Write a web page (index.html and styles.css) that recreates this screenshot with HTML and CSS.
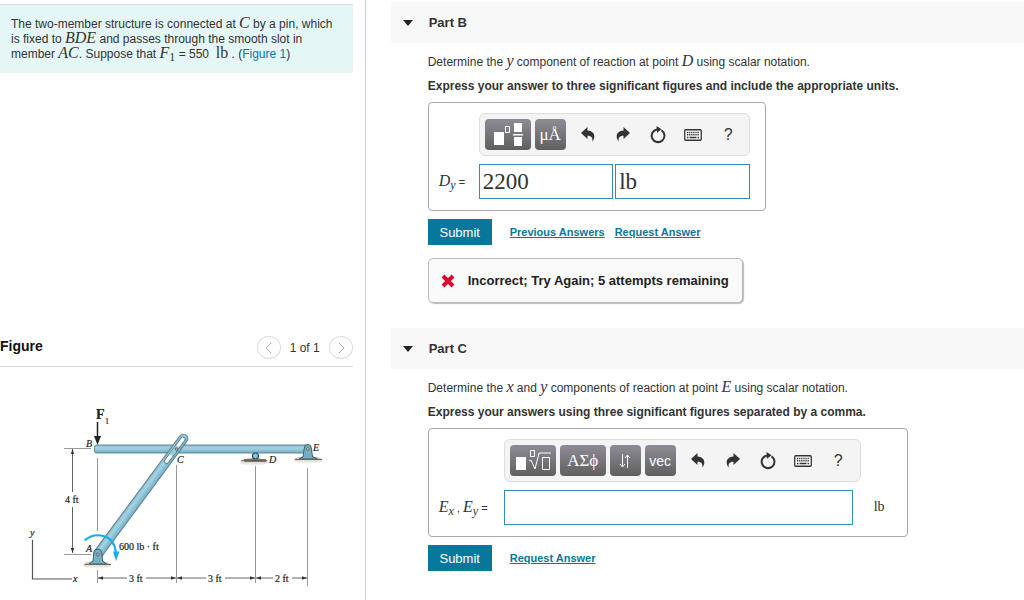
FILE: index.html
```html
<!DOCTYPE html>
<html lang="en">
<head>
    <meta charset="UTF-8">
    <meta name="viewport" content="width=device-width, initial-scale=1.0">
    <title>Two-member structure</title>
    <link rel="stylesheet" href="styles.css">
</head>
<body>
    <!-- shared toolbar icons -->
    <svg class="sprite" aria-hidden="true">
        <symbol id="undo" viewBox="0 0 14 15">
            <path d="M0 6 6.500 0v3.500c4.500.2 7 2.800 6.800 6.200-.1 2-.8 3.300-2.100 4.800.8-3.600-.5-5.800-4.700-5.800V12z"/>
        </symbol>
        <symbol id="redo" viewBox="0 0 14 15">
            <path d="M14 6 7.500 0v3.500C3 3.700.5 6.300.7 9.700c.1 2 .8 3.300 2.100 4.800-.8-3.600.5-5.800 4.700-5.800V12z"/>
        </symbol>
        <symbol id="reset" viewBox="0 0 18 18">
            <path d="M12.500 4.300A6.400 6.400 0 1 1 8 3.400" fill="none" stroke="currentColor" stroke-width="2"/>
            <path d="M7.500 0 12.600 3.200 8 6.800z"/>
        </symbol>
        <symbol id="keyboard" viewBox="0 0 18 12">
            <rect x=".75" y=".75" width="16.500" height="10.500" rx="1" fill="#fff" stroke="currentColor" stroke-width="1.300"/>
            <path d="M3 3.500h12M3 5.700h12" stroke="currentColor" stroke-width="1.400" stroke-dasharray="1.300 .8"/>
            <path d="M3 8.500h1.500M5.500 8.500h7M13.500 8.500H15" stroke="currentColor" stroke-width="1.400"/>
        </symbol>
    </svg>

    <div class="page">
        <aside class="left">
            <div class="problem">
                The two-member structure is connected at <i>C</i> by a pin, which is fixed to <i>BDE</i> and passes through the smooth slot in member <i>AC</i>. Suppose that <i>F</i><sub>1</sub> = 550 &nbsp;<span class="unit">lb</span> . (<a href="#figure">Figure 1</a>)
            </div>

            <section class="figure" id="figure">
                <div class="figure-head">
                    <h2>Figure</h2>
                    <div class="pager">
                        <button aria-label="Previous figure"><svg viewBox="0 0 10 12"><path d="M7 1 2 6l5 5"/></svg></button>
                        <span>1 of 1</span>
                        <button aria-label="Next figure"><svg viewBox="0 0 10 12"><path d="m3 1 5 5-5 5"/></svg></button>
                    </div>
                </div>
                <svg class="drawing" viewBox="0 0 340 200" role="img" aria-label="Structure with members BDE and AC">
                    <defs>
                        <linearGradient id="beam" x1="0" y1="0" x2="0" y2="1">
                            <stop offset="0" stop-color="#86b9cc"/>
                            <stop offset=".35" stop-color="#a7d3e3"/>
                            <stop offset="1" stop-color="#6fb0c9"/>
                        </linearGradient>
                        <linearGradient id="ground" x1="0" y1="0" x2="0" y2="1">
                            <stop offset="0" stop-color="#b9b3a0"/>
                            <stop offset="1" stop-color="#fff"/>
                        </linearGradient>
                        <marker id="tip" viewBox="0 0 6 4" refX="6" refY="2" markerWidth="5" markerHeight="4" markerUnits="userSpaceOnUse" orient="auto-start-reverse">
                            <path d="M0 0 6 2 0 4z" fill="#333"/>
                        </marker>
                    </defs>

                    <!-- axes and extension lines -->
                    <g fill="none" stroke="#999" stroke-width="1">
                        <path d="M32.500 140v39H72" stroke="#555" stroke-width="1.200"/>
                        <path d="M64 48.500h27M64 154.500h27M97.500 58v73M97.500 170v13M176.500 65v118M255.500 65v118M307.500 68v118"/>
                    </g>
                    <!-- dimensions -->
                    <g stroke="#666" stroke-width="1">
                        <path d="M72.500 92V49" marker-end="url(#tip)"/>
                        <path d="M72.500 107v46" marker-end="url(#tip)"/>
                        <path d="M127 178H98" marker-end="url(#tip)"/>
                        <path d="M146 178h30" marker-end="url(#tip)"/>
                        <path d="M206 178h-29" marker-end="url(#tip)"/>
                        <path d="M225 178h30" marker-end="url(#tip)"/>
                        <path d="M273 178h-17" marker-end="url(#tip)"/>
                        <path d="M292 178h15" marker-end="url(#tip)"/>
                    </g>

                    <!-- ground under the supports -->
                    <ellipse cx="97" cy="165" rx="14" ry="4" fill="url(#ground)"/>
                    <ellipse cx="254" cy="62" rx="14" ry="4" fill="url(#ground)"/>
                    <ellipse cx="308" cy="60" rx="14" ry="4" fill="url(#ground)"/>

                    <!-- horizontal member -->
                    <rect x="94.500" y="45" width="215" height="8" rx="2" fill="url(#beam)" stroke="#5b7f8d" stroke-width=".9"/>
                    <!-- slotted member -->
                    <g transform="translate(98 154) rotate(-53.500)">
                        <rect x="-4" y="-4.500" width="152" height="9" rx="4.500" fill="url(#beam)" stroke="#5b7f8d" stroke-width="1"/>
                        <rect x="113" y="-2.200" width="32" height="4.400" rx="2.200" fill="#fff" stroke="#456f80" stroke-width=".9"/>
                        <rect x="123" y="-1.700" width="11" height="3.400" fill="#9cc9da"/>
                    </g>
                    <circle cx="176.500" cy="49" r="1.300" fill="#aaa" stroke="#555" stroke-width=".7"/>

                    <!-- pin A -->
                    <path d="M89 164l4-3 .8-8a4 4 0 0 1 8 0l.8 8 4 3z" fill="#73b0c8" stroke="#355766" stroke-width=".9"/>
                    <circle cx="97.800" cy="154.500" r="1.500" fill="#aaa" stroke="#555" stroke-width=".7"/>
                    <path d="M85 164.500h26" stroke="#6b675e"/>
                    <!-- roller D -->
                    <circle cx="255.500" cy="56" r="3" fill="#8dc6dc" stroke="#23495a" stroke-width="1.200"/>
                    <path d="M241 60.500h26" stroke="#8a8678"/>
                    <path d="M244 60.500h22" stroke="#605d5a" stroke-width="2.500"/>
                    <!-- pin E -->
                    <path d="M299 59l4-2 1.300-9a3.500 3.500 0 0 1 7 0l1.300 9 5 2z" fill="#73b0c8" stroke="#355766" stroke-width=".9"/>
                    <circle cx="307.800" cy="49" r="1.500" fill="#bbb" stroke="#555" stroke-width=".7"/>
                    <path d="M295 59.500h27" stroke="#6b675e"/>

                    <!-- force and couple -->
                    <path d="M97.500 22v15" stroke="#222" stroke-width="1.500"/>
                    <path d="M94 36h7l-3.500 9z" fill="#222"/>
                    <path d="M84.500 140.500C95 132 114 133 116 153" fill="none" stroke="#16adef" stroke-width="2"/>
                    <path d="M113 151.500h6.500L116 161z" fill="#16adef"/>

                    <g class="labels">
                        <text x="96" y="19" class="force">F</text>
                        <text x="105" y="24" class="index">1</text>
                        <text x="65" y="103">4 ft</text>
                        <text x="119" y="150">600 lb · ft</text>
                        <text x="129" y="182">3 ft</text>
                        <text x="208" y="182">3 ft</text>
                        <text x="275" y="182">2 ft</text>
                        <g font-style="italic">
                            <text x="86" y="47">B</text>
                            <text x="177" y="63">C</text>
                            <text x="269" y="63">D</text>
                            <text x="313" y="51">E</text>
                            <text x="86" y="152">A</text>
                            <text x="30" y="136">y</text>
                            <text x="73" y="182">x</text>
                        </g>
                    </g>
                </svg>
            </section>
        </aside>

        <main class="right">
            <section class="part">
                <h2 class="part-head">Part B</h2>
                <div class="part-body">
                    <p>Determine the <i>y</i> component of reaction at point <i>D</i> using scalar notation.</p>
                    <p class="hint">Express your answer to three significant figures and include the appropriate units.</p>

                    <div class="answer">
                        <div class="entry">
                            <div class="toolbar">
                                <button class="dark wide" aria-label="Templates">
                                    <svg width="30" height="24" viewBox="0 0 30 24">
                                        <path d="M1 9h10v13H1zM21 0h8v9h-8zM21 14h8v9h-8zM20 11h10v1.500H20z" fill="#fff"/>
                                        <path d="M12.500 3.500h4v6h-4z" fill="none" stroke="#fff"/>
                                    </svg>
                                </button>
                                <button class="dark serif">μÅ</button>
                                <div class="tools">
                                    <button aria-label="Undo"><svg width="14" height="15"><use href="#undo"/></svg></button>
                                    <button aria-label="Redo"><svg width="14" height="15"><use href="#redo"/></svg></button>
                                    <button aria-label="Reset"><svg width="18" height="18"><use href="#reset"/></svg></button>
                                    <button aria-label="Keyboard shortcuts"><svg class="keys" width="18" height="12"><use href="#keyboard"/></svg></button>
                                    <button>?</button>
                                </div>
                            </div>
                            <label for="dy"><i>D</i><sub><i>y</i></sub> =</label>
                            <div class="fields">
                                <input type="text" id="dy" value="2200">
                                <input type="text" value="lb" aria-label="Units">
                            </div>
                        </div>
                    </div>

                    <div class="actions">
                        <button class="submit">Submit</button>
                        <a href="#">Previous Answers</a>
                        <a href="#">Request Answer</a>
                    </div>

                    <div class="feedback">
                        <svg width="14" height="14" viewBox="0 0 14 14"><path d="m2 2 10 10M12 2 2 12"/></svg>
                        Incorrect; Try Again; 5 attempts remaining
                    </div>
                </div>
            </section>

            <section class="part">
                <h2 class="part-head">Part C</h2>
                <div class="part-body">
                    <p>Determine the <i>x</i> and <i>y</i> components of reaction at point <i>E</i> using scalar notation.</p>
                    <p class="hint">Express your answers using three significant figures separated by a comma.</p>

                    <div class="answer answer-long">
                        <div class="entry">
                            <div class="toolbar">
                                <button class="dark wide" aria-label="Templates">
                                    <svg width="36" height="24" viewBox="0 0 36 24">
                                        <path d="M1 8h10v13H1z" fill="#fff"/>
                                        <path d="M15.500 1.500h4v6h-4zM27.500 8.500h7v12h-7zM14 12l2-1 4 9 4-16h12" fill="none" stroke="#fff"/>
                                    </svg>
                                </button>
                                <button class="dark wide serif">ΑΣϕ</button>
                                <button class="dark" aria-label="Arrows">
                                    <svg width="14" height="16" viewBox="0 0 14 16"><path d="M4.500 1v13M2 11l2.500 3L7 11M9.500 15V2M7 5l2.500-3L12 5" fill="none" stroke="#fff"/></svg>
                                </button>
                                <button class="dark">vec</button>
                                <div class="tools">
                                    <button aria-label="Undo"><svg width="14" height="15"><use href="#undo"/></svg></button>
                                    <button aria-label="Redo"><svg width="14" height="15"><use href="#redo"/></svg></button>
                                    <button aria-label="Reset"><svg width="18" height="18"><use href="#reset"/></svg></button>
                                    <button aria-label="Keyboard shortcuts"><svg class="keys" width="18" height="12"><use href="#keyboard"/></svg></button>
                                    <button>?</button>
                                </div>
                            </div>
                            <label for="exy"><i>E</i><sub><i>x</i></sub> , <i>E</i><sub><i>y</i></sub> =</label>
                            <div class="fields">
                                <input type="text" id="exy">
                            </div>
                        </div>
                        <span class="unit">lb</span>
                    </div>

                    <div class="actions">
                        <button class="submit">Submit</button>
                        <a href="#">Request Answer</a>
                    </div>
                </div>
            </section>
        </main>
    </div>
</body>
</html>
```
FILE: styles.css
```css
*{
    box-sizing: border-box;
}
body{
    margin: 0;
    font-family: "Liberation Sans", Arial, sans-serif;
    font-size: 12px;
    color: #333;
    background-color: #fff;
}
h2, p{
    margin: 0;
}
button{
    padding: 0;
    border: none;
    background: none;
    font-family: inherit;
    color: inherit;
    cursor: pointer;
}
a{
    color: #07789c;
}
i, .unit{
    font-family: "Liberation Serif", "Times New Roman", serif;
    font-size: 16px;
    line-height: 1px;
}
sub, sub i{
    font-family: "Liberation Serif", "Times New Roman", serif;
    font-size: 12px;
    line-height: 1px;
}
.sprite{
    display: none;
}
.page{
    display: grid;
    grid-template-columns: 5fr 9fr;
    height: 100vh;
}

/* left column */
.left{
    display: flex;
    flex-direction: column;
    justify-content: space-between;
    padding: 4px 12px 0 0;
    border-right: 1px solid #c5d3e3;
}
.problem{
    padding: 12px 10px 11px 11px;
    border-top: 1px solid #d5dddd;
    background-color: #e4f6f6;
    line-height: 15px;
}
.problem a{
    text-decoration: none;
}
.figure-head{
    display: flex;
    justify-content: space-between;
    align-items: center;
    padding-bottom: 7px;
    border-bottom: 1px solid #ddd;
}
.figure-head h2{
    padding-bottom: 4px;
    font-size: 14px;
    color: #111;
}
.pager{
    display: flex;
    align-items: center;
    gap: 9px;
}
.pager button{
    display: flex;
    align-items: center;
    justify-content: center;
    width: 24px;
    height: 23px;
    border: 1px solid #ddd;
    border-radius: 50%;
}
.pager svg{
    width: 10px;
    height: 12px;
    fill: none;
    stroke: #aaa;
}
.drawing{
    display: block;
    width: 340px;
    height: 200px;
    margin-top: 33px;
}
.labels{
    font-family: "Liberation Serif", "Times New Roman", serif;
    font-size: 10px;
    fill: #222;
    stroke: #222;
    stroke-width: .2px;
}
.labels .force{
    font-size: 14px;
    font-weight: bold;
}
.labels .index{
    font-size: 8px;
}

/* right column */
.right{
    padding: 2px 0 0 25px;
    overflow: hidden;
}
.part{
    margin-bottom: 25px;
}
.part-head{
    display: flex;
    align-items: center;
    gap: 16px;
    height: 41px;
    padding-left: 12px;
    background-color: #f8f8f8;
    font-size: 13px;
}
.part-head::before{
    content: "";
    border: 5px solid transparent;
    border-top: 6px solid #222;
    border-bottom: none;
}
.part-body{
    padding: 11px 20px 0 37px;
}
.part-body p{
    line-height: 16px;
}
.part-body .hint{
    margin: 8px 0;
    font-weight: bold;
}
.answer{
    display: flex;
    width: fit-content;
    padding: 10px 15px 11px 10px;
    border: 1px solid #aaa;
    border-radius: 4px;
}
.entry{
    display: grid;
    grid-template-columns: 40px 271px;
    row-gap: 8px;
    align-items: center;
}
.answer-long .entry{
    grid-template-columns: 65px 357px;
}
.answer-long .fields{
    padding-right: 8px;
}
.answer-long > .unit{
    align-self: flex-end;
    margin: 0 7px 10px 13px;
    font-size: 14px;
    line-height: 16px;
}
.toolbar{
    grid-column: 2;
    display: flex;
    gap: 4px;
    padding: 5px;
    border: 1px solid #ddd;
    border-radius: 6px;
    background-color: #f4f4f4;
}
.toolbar button{
    display: flex;
    align-items: center;
    justify-content: center;
    width: 31px;
    height: 31px;
    font-size: 16px;
}
.toolbar .dark{
    border-radius: 4px;
    background: linear-gradient(#8e8c96, #5f5f5f);
    color: #fff;
    font-size: 14px;
}
.toolbar .wide{
    width: 46px;
}
.toolbar .serif{
    font-family: "Liberation Serif", "Times New Roman", serif;
    font-size: 17px;
}
.tools{
    display: flex;
    gap: 4px;
    padding-left: 3px;
}
.tools svg{
    fill: currentColor;
}
.entry label{
    font-size: 11px;
    white-space: nowrap;
}
.fields{
    display: flex;
    gap: 2px;
}
.fields input{
    flex: 1;
    width: 0;
    height: 35px;
    padding: 0 3px;
    border: 1px solid #2f8fae;
    font-family: "Liberation Serif", "Times New Roman", serif;
    font-size: 23px;
    color: #333;
}
.actions{
    display: flex;
    align-items: center;
    gap: 10px;
    margin-top: 8px;
    font-size: 11px;
    font-weight: bold;
}
.submit{
    width: 64px;
    height: 26px;
    margin-right: 8px;
    background-color: #07789c;
    color: #fff;
    font-size: 13px;
}
.feedback{
    display: flex;
    align-items: center;
    gap: 13px;
    width: fit-content;
    height: 45px;
    margin-top: 13px;
    padding: 0 13px 0 12px;
    border: 1px solid #bbb;
    border-radius: 5px;
    background-color: #f9f9f9;
    box-shadow: 1px 1px 1px #bbb;
    font-size: 13px;
    font-weight: bold;
    color: #222;
}
.feedback svg{
    stroke: #dc0a2d;
    stroke-width: 4;
}
```
